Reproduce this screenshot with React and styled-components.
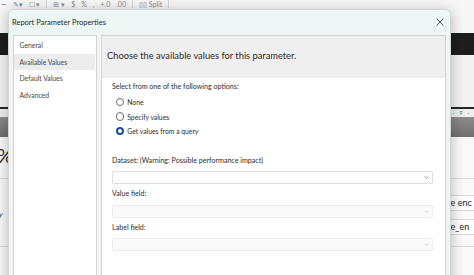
import React from 'react';
import styled, { createGlobalStyle } from 'styled-components';

const GlobalStyle = createGlobalStyle`
  html, body { margin: 0; padding: 0; }
  body {
    width: 474px;
    height: 275px;
    overflow: hidden;
    font-family: Lato, "Noto Sans", sans-serif;
  }
`;

const Screen = styled.div`
  position: relative;
  width: 474px;
  height: 275px;
  overflow: hidden;
  background: #f4f4f4;
`;

/* ---------- the app behind the dialog ---------- */

const Backdrop = styled.div`
  display: flex;
  flex-direction: column;
  height: 100%;
`;

const Toolbar = styled.div`
  height: 33px;
  flex: none;
  background: #f7f7f7;
  display: flex;
  align-items: flex-start;
  gap: 6px;
  padding-left: 1px;
  font-size: 7px;
  line-height: 8px;
  color: #777;
`;

const ToolGlyph = styled.span`
  color: ${(p) => p.$tone || '#8a8a8a'};
  white-space: nowrap;
`;

const ToolSep = styled.span`
  width: 1px;
  height: 8px;
  background: #d6d6d6;
`;

const DarkBand = styled.div`
  height: 22px;
  flex: none;
  background: #1d1d1d;
`;

const Pane = styled.div`
  height: 52px;
  flex: none;
  background: #f2f2f2;
  border-bottom: 2px solid #262626;
`;

const Ruler = styled.div`
  height: 8px;
  flex: none;
  background: #efefef;
  display: flex;
  justify-content: flex-end;
  padding-right: 3px;
  font-size: 5px;
  line-height: 8px;
  color: #666;
  letter-spacing: 2px;
`;

const GreyBand = styled.div`
  height: 20px;
  flex: none;
  background: linear-gradient(#8c8c8c, #6f6f6f);
`;

const Sheet = styled.div`
  flex: 1;
  background: #f9f9f9;
  display: flex;
  flex-direction: column;
`;

const SheetRow = styled.div`
  height: ${(p) => p.$h}px;
  flex: none;
  display: flex;
  justify-content: space-between;
  align-items: flex-start;
  border-bottom: 1px solid #dcdcdc;
`;

const BigMark = styled.span`
  margin: 6px 0 0 -3px;
  font-size: 20px;
  line-height: 24px;
  color: #2a2a2a;
`;

const SmallMark = styled.span`
  margin: 30px 0 0 -1px;
  font-size: 8px;
  color: #444;
  font-style: italic;
`;

const CellStack = styled.div`
  display: flex;
  flex-direction: column;
  gap: 8px;
  margin-top: 16px;
`;

const Cell = styled.div`
  height: 14px;
  padding-left: 3px;
  background: #fff;
  border-top: 1px solid #d8d8d8;
  border-bottom: 1px solid #d8d8d8;
  font-size: 9px;
  line-height: 14px;
  color: #1e1e1e;
  white-space: nowrap;
  width: 28px;
  overflow: hidden;
  text-indent: -3px;
`;

/* ---------- the dialog ---------- */

const Dialog = styled.div`
  position: absolute;
  left: 8px;
  top: 9px;
  width: 443px;
  height: 280px;
  box-sizing: border-box;
  background: #f3f3f3;
  border: 1px solid #cfd8d7;
  border-radius: 6px 6px 0 0;
  box-shadow: 0 2px 14px rgba(0, 0, 0, 0.28);
  display: flex;
  flex-direction: column;
  overflow: hidden;
  z-index: 2;
`;

const TitleBar = styled.div`
  height: 24px;
  flex: none;
  background: #edf8f6;
  display: flex;
  align-items: center;
  justify-content: space-between;
  padding: 0 6px 0 3px;
  font-size: 7.5px;
  color: #1f1f1f;
`;

const CloseButton = styled.button`
  width: 9px;
  height: 9px;
  padding: 0;
  border: 0;
  background: none;
  display: flex;
  align-items: center;
  justify-content: center;
  color: #333;
`;

const Body = styled.div`
  flex: 1;
  display: flex;
  gap: 4px;
  padding: 1px 4.5px 0 3.5px;
`;

const Nav = styled.div`
  width: 84.5px;
  flex: none;
  box-sizing: border-box;
  background: #fff;
  border: 1px solid #d3d3d3;
  padding: 1px 1px 0 0;
`;

const NavItem = styled.div`
  height: 16.5px;
  padding-left: 6px;
  font-size: 6.8px;
  line-height: 16.5px;
  color: #474747;
  background: ${(p) => (p.$active ? '#ececec' : 'transparent')};
`;

const Panel = styled.div`
  flex: 1;
  box-sizing: border-box;
  background: #fff;
  border: 1px solid #d3d3d3;
  display: flex;
  flex-direction: column;
`;

const PanelHeader = styled.div`
  height: 42px;
  flex: none;
  background: #efefef;
  display: flex;
  align-items: center;
  padding: 0 0 4px 5px;
  box-sizing: border-box;
  font-size: 9.3px;
  color: #2b2b2b;
`;

const Content = styled.div`
  display: flex;
  flex-direction: column;
  padding: 4px 12px 0 10px;
`;

const Label = styled.div`
  margin-top: ${(p) => p.$mt || 0}px;
  font-size: 7.1px;
  line-height: 10px;
  color: #2e2e2e;
`;

const RadioGroup = styled.div`
  display: flex;
  flex-direction: column;
  margin-top: 2.75px;
`;

const RadioRow = styled.label`
  height: 14.5px;
  display: flex;
  align-items: center;
  gap: 3px;
  padding-left: 3.75px;
  font-size: 6.8px;
  color: #2e2e2e;
`;

const RadioDot = styled.span`
  width: 8.5px;
  height: 8.5px;
  box-sizing: border-box;
  border-radius: 50%;
  background: #fff;
  border: ${(p) => (p.$checked ? '2.5px solid #1b4f8f' : '1px solid #6b6b6b')};
`;

const Select = styled.div`
  margin-top: ${(p) => p.$mt}px;
  height: ${(p) => p.$h}px;
  box-sizing: border-box;
  border: 1px solid ${(p) => (p.$disabled ? '#ececec' : '#dedede')};
  border-radius: 2px;
  background: ${(p) => (p.$disabled ? '#fafafa' : '#fff')};
  display: flex;
  align-items: center;
  justify-content: flex-end;
  padding-right: 3px;
  color: ${(p) => (p.$disabled ? '#c8c8c8' : '#8a8a8a')};
`;

const Chevron = () => (
  <svg width="5" height="3" viewBox="0 0 5 3" fill="none">
    <path d="M0.5 0.5 L2.5 2.5 L4.5 0.5" stroke="currentColor" strokeWidth="0.7" />
  </svg>
);

const CloseIcon = () => (
  <svg width="8" height="8" viewBox="0 0 8 8" fill="none">
    <path d="M0.5 0.5 L7.5 7.5 M7.5 0.5 L0.5 7.5" stroke="currentColor" strokeWidth="0.8" />
  </svg>
);

const navItems = ['General', 'Available Values', 'Default Values', 'Advanced'];
const options = [
  { label: 'None', checked: false },
  { label: 'Specify values', checked: false },
  { label: 'Get values from a query', checked: true },
];

export default function App() {
  return (
    <Screen>
      <GlobalStyle />
      <Backdrop>
        <Toolbar>
          <ToolGlyph $tone="#444">—</ToolGlyph>
          <ToolGlyph $tone="#6b7fb0">✎▾</ToolGlyph>
          <ToolGlyph>☐ ▾</ToolGlyph>
          <ToolSep />
          <ToolGlyph>⊞ ▾</ToolGlyph>
          <ToolGlyph>$</ToolGlyph>
          <ToolGlyph>%</ToolGlyph>
          <ToolGlyph>,</ToolGlyph>
          <ToolGlyph>+.0</ToolGlyph>
          <ToolGlyph>.00</ToolGlyph>
          <ToolSep />
          <ToolGlyph>▯▯ Split</ToolGlyph>
          <ToolSep />
        </Toolbar>
        <DarkBand />
        <Pane />
        <Ruler>· 9 ·</Ruler>
        <GreyBand />
        <Sheet>
          <SheetRow $h={41}>
            <BigMark>%</BigMark>
          </SheetRow>
          <SheetRow $h={67}>
            <SmallMark>y</SmallMark>
            <CellStack>
              <Cell>ate enc</Cell>
              <Cell>ate_en</Cell>
            </CellStack>
          </SheetRow>
        </Sheet>
      </Backdrop>

      <Dialog>
        <TitleBar>
          <span>Report Parameter Properties</span>
          <CloseButton aria-label="Close">
            <CloseIcon />
          </CloseButton>
        </TitleBar>
        <Body>
          <Nav>
            {navItems.map((item) => (
              <NavItem key={item} $active={item === 'Available Values'}>
                {item}
              </NavItem>
            ))}
          </Nav>
          <Panel>
            <PanelHeader>Choose the available values for this parameter.</PanelHeader>
            <Content>
              <Label>Select from one of the following options:</Label>
              <RadioGroup>
                {options.map((o) => (
                  <RadioRow key={o.label}>
                    <RadioDot $checked={o.checked} />
                    {o.label}
                  </RadioRow>
                ))}
              </RadioGroup>
              <Label $mt={17.75}>Dataset: (Warning: Possible performance impact)</Label>
              <Select $mt={5} $h={12.5}>
                <Chevron />
              </Select>
              <Label $mt={5.5}>Value field:</Label>
              <Select $mt={5.5} $h={13} $disabled>
                <Chevron />
              </Select>
              <Label $mt={5.5}>Label field:</Label>
              <Select $mt={5} $h={13} $disabled>
                <Chevron />
              </Select>
            </Content>
          </Panel>
        </Body>
      </Dialog>
    </Screen>
  );
}
